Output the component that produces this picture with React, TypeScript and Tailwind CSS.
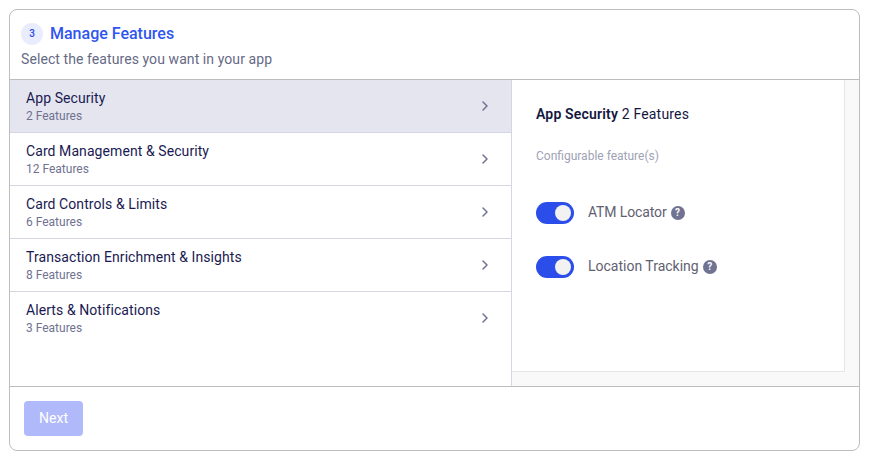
import { ChevronRight } from "lucide-react";

const items = [
  { name: "App Security", count: "2 Features", active: true },
  { name: "Card Management & Security", count: "12 Features" },
  { name: "Card Controls & Limits", count: "6 Features" },
  { name: "Transaction Enrichment & Insights", count: "8 Features" },
  { name: "Alerts & Notifications", count: "3 Features" },
];

const HelpIcon = () => (
  <span className="flex w-[14px] h-[14px] shrink-0 items-center justify-center rounded-full bg-[#6f7290] text-[10px] leading-none font-bold text-white">
    ?
  </span>
);

const Toggle = () => (
  <div className="flex w-[38px] h-[22px] items-center justify-end rounded-full bg-[#2b4eea] pr-[3px]">
    <div className="w-[16px] h-[16px] rounded-full bg-[#f2f2f2]" />
  </div>
);

export default function App() {
  return (
    <div className="h-[457px] w-[875px] bg-white pt-[9px] pl-[9px] font-['Roboto',sans-serif]">
      <div className="flex h-[442px] w-[851px] flex-col overflow-hidden rounded-[8px] border border-[#bdbdbd]">
        <div className="h-[70px] shrink-0 border-b border-[#bdbdbd] pl-[11px] pt-[12px]">
          <div className="flex items-center gap-[7px]">
            <div className="flex h-[22px] w-[22px] items-center justify-center rounded-full bg-[#e8ecfd] text-[10px] font-medium text-[#2b4eea]">
              3
            </div>
            <div className="pt-[1px] text-[16px] leading-[22px] font-medium text-[#2f55f0]">Manage Features</div>
          </div>
          <div className="mt-[4px] text-[14px] leading-[20px] tracking-[0.08px] text-[#666a85]">
            Select the features you want in your app
          </div>
        </div>

        <div className="flex min-h-0 flex-1">
          <div className="w-[502px] shrink-0 border-r border-[#d5d6e3]">
            {items.map((item, i) => (
              <div
                key={item.name}
                className={`flex h-[53px] items-center justify-between pl-[16px] pr-[18px] border-b ${
                  item.active ? "bg-[#e4e5ef]" : "bg-white"
                } ${i < items.length - 1 ? "border-[#d5d6e3]" : "border-transparent"}`}
              >
                <div>
                  <div className="text-[14px] leading-[20px] tracking-[0.08px] text-[#1a1a52]">{item.name}</div>
                  <div className="text-[12px] leading-[16px] text-[#6f7290]">{item.count}</div>
                </div>
                <ChevronRight className="h-[16px] w-[16px] text-[#6f7290]" strokeWidth={2.25} />
              </div>
            ))}
          </div>

          <div className="flex-1 bg-[#f9f9f9] pb-[14px] pr-[14px]">
            <div className="h-full border-b border-r border-[#e6e6e6] bg-white pl-[24px] pt-[24px]">
              <div className="text-[14px] leading-[20px] tracking-[0.18px] text-[#14173f]">
                <span className="font-semibold">App Security</span> 2 Features
              </div>
              <div className="mt-[24px] text-[12px] leading-[16px] text-[#a0a2b5]">Configurable feature(s)</div>

              <div className="mt-[38px] flex items-center gap-[14px]">
                <Toggle />
                <div className="flex items-center gap-[4px] text-[14px] leading-[20px] tracking-[-0.13px] text-[#5f6172]">
                  <span className="pb-[2px]">ATM Locator</span> <HelpIcon />
                </div>
              </div>
              <div className="mt-[32px] flex items-center gap-[14px]">
                <Toggle />
                <div className="flex items-center gap-[4px] text-[14px] leading-[20px] text-[#5f6172]">
                  <span className="pb-[2px]">Location Tracking</span> <HelpIcon />
                </div>
              </div>
            </div>
          </div>
        </div>

        <div className="h-[64px] shrink-0 border-t border-[#bdbdbd] pl-[14px] pt-[14px]">
          <button className="h-[35px] w-[59px] rounded-[4px] bg-[#b0b9fa] text-[14px] text-white">Next</button>
        </div>
      </div>
    </div>
  );
}
